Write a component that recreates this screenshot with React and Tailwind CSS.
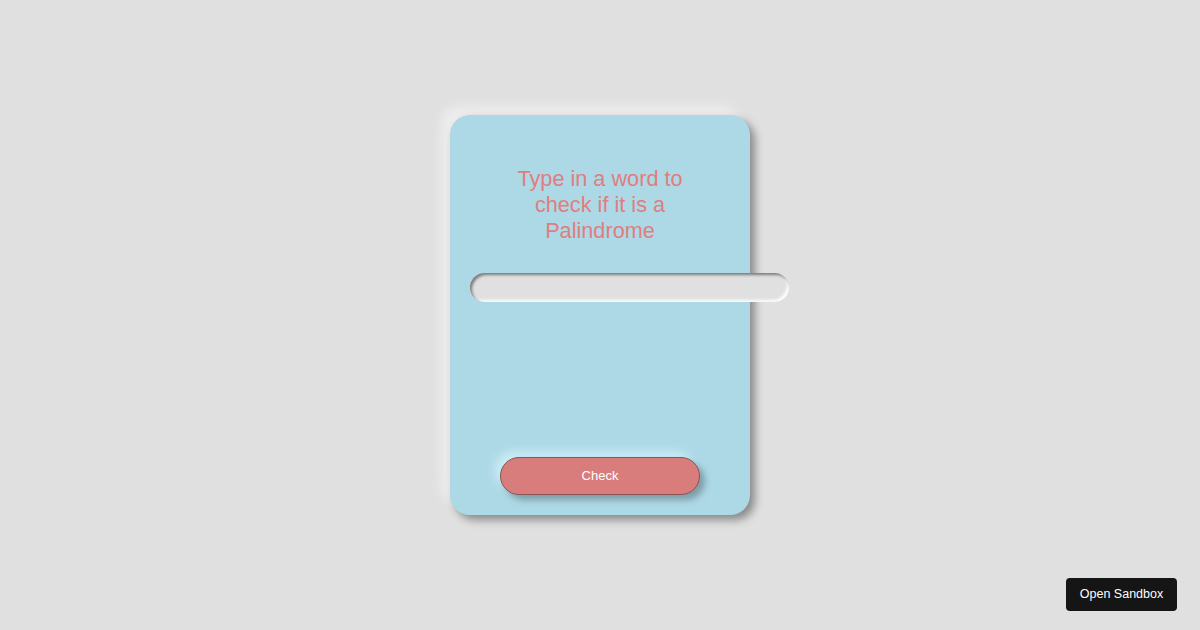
import React, { useState } from 'react'

const App = () => {
  const [word, setWord] = useState('')

  return (
    <div className="w-full h-[630px] bg-[#e0e0e0] flex items-center justify-center relative" style={{ fontFamily: '"Liberation Sans", Arial, sans-serif' }}>
      <div className="w-[300px] h-[400px] bg-[#add8e6] rounded-[20px] flex flex-col shadow-[5px_5px_8px_#8a8a8a,-10px_-10px_10px_#ececec]">
        <h1 className="mt-[51px] mx-auto w-[180px] text-center text-[21.7px] leading-[26px] text-[#e07e7e] font-normal">
          Type in a word to check if it is a Palindrome
        </h1>
        <input
          value={word}
          onChange={(e) => setWord(e.target.value)}
          className="mt-[29px] ml-[20px] w-[319px] shrink-0 h-[29px] rounded-full bg-[#e0e0e0] px-4 outline-none shadow-[inset_2px_2px_3px_#7a7a7a,inset_-2px_-2px_3px_#ffffff]"
        />
        <button className="mt-auto mb-[20px] mx-auto w-[200px] h-[38px] rounded-full bg-[#d87c7c] border border-[#8a5555] text-white text-[13px] shadow-[5px_5px_6px_#7d9ea8,-6px_-6px_10px_#c8ecf4]">
          Check
        </button>
      </div>
      <button className="absolute right-[23px] bottom-[19px] w-[111px] h-[33px] rounded-[4px] bg-[#151515] text-white text-[12.5px]" style={{ fontFamily: '"Liberation Sans", Arial, sans-serif' }}>
        Open Sandbox
      </button>
    </div>
  )
}

export default App
